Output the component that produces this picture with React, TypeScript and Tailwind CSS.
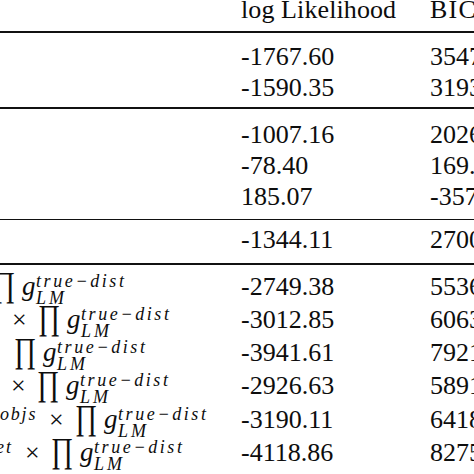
import React from "react";

const MINUS = "\u2212";

function Stack() {
  return (
    <span className="inline-flex flex-col align-[8px] text-[18px] leading-[17px] italic">
      <span className="tracking-[2.6px]">{`true${MINUS}dist`}</span>
      <span className="tracking-[3px]">LM</span>
    </span>
  );
}

function Times() {
  return <span className="inline-block w-[26px]">×</span>;
}

function Prod() {
  return (
    <span className="inline-block w-[29px] text-[27px] leading-none">
      <span className="inline-block scale-y-[1.3] origin-[50%_75%]">∏</span>
    </span>
  );
}

function G() {
  return <span className="inline-block w-[14px] italic text-[27px] leading-none">g</span>;
}

function Row({ h, ll, bic, formula }: { h: "a" | "b"; ll: string; bic: string; formula?: React.ReactNode }) {
  return (
    <div className={h === "a" ? "flex h-[31px] leading-[31px]" : "flex h-[33.3px] leading-[33.3px]"}>
      <div className="w-[241px] shrink-0 whitespace-nowrap">{formula}</div>
      <div className="w-[189px] shrink-0 whitespace-nowrap">{ll}</div>
      <div className="whitespace-nowrap">{bic}</div>
    </div>
  );
}

function Rule() {
  return <div className="h-[1.5px] bg-[#111111]" />;
}

export default function App() {
  return (
    <div className="w-[474px] h-[474px] overflow-hidden bg-white text-[#0d0d0d] [font-family:'Liberation_Serif',serif] text-[26px]">
      <div className="w-[620px]">
        <div className="flex h-[31px] leading-[20px]">
          <div className="w-[241px] shrink-0" />
          <div className="w-[189px] shrink-0 whitespace-nowrap tracking-[0.1px]">log Likelihood</div>
          <div className="whitespace-nowrap tracking-[1.2px]">BIC</div>
        </div>
        <Rule />
        <div className="pt-[8px] pb-[4.5px]">
          <Row h="a" ll="-1767.60" bic="3547.34" />
          <Row h="a" ll="-1590.35" bic="3193.07" />
        </div>
        <Rule />
        <div className="pt-[10px] pb-[7px]">
          <Row h="a" ll="-1007.16" bic="2026.59" />
          <Row h="a" ll="-78.40" bic="169.24" />
          <Row h="a" ll="185.07" bic="-357.93" />
        </div>
        <Rule />
        <div className="pt-[3.5px] pb-[8.5px]">
          <Row h="a" ll="-1344.11" bic="2700.51" />
        </div>
        <Rule />
        <div className="pt-[5px]">
          <Row
            h="b"
            ll="-2749.38"
            bic="5536.93"
            formula={
              <span className="inline-block ml-[-7px]">
                <Prod />
                <G />
                <Stack />
              </span>
            }
          />
          <Row
            h="b"
            ll="-3012.85"
            bic="6063.87"
            formula={
              <span className="inline-block ml-[12px]">
                <Times />
                <Prod />
                <G />
                <Stack />
              </span>
            }
          />
          <Row
            h="b"
            ll="-3941.61"
            bic="7921.39"
            formula={
              <span className="inline-block ml-[14px]">
                <Prod />
                <G />
                <Stack />
              </span>
            }
          />
          <Row
            h="b"
            ll="-2926.63"
            bic="5891.43"
            formula={
              <span className="inline-block ml-[11px]">
                <Times />
                <Prod />
                <G />
                <Stack />
              </span>
            }
          />
          <Row
            h="b"
            ll="-3190.11"
            bic="6418.40"
            formula={
              <span className="inline-block">
                <span className="inline-block w-[49px] align-[8px] text-[18px] leading-[17px] italic tracking-[1.8px]">objs</span>
                <Times />
                <Prod />
                <G />
                <Stack />
              </span>
            }
          />
          <Row
            h="b"
            ll="-4118.86"
            bic="8275.89"
            formula={
              <span className="inline-block ml-[-4px]">
                <span className="inline-block w-[29px] align-[8px] text-[18px] leading-[17px] italic tracking-[2px]">et</span>
                <Times />
                <Prod />
                <G />
                <Stack />
              </span>
            }
          />
        </div>
      </div>
    </div>
  );
}
